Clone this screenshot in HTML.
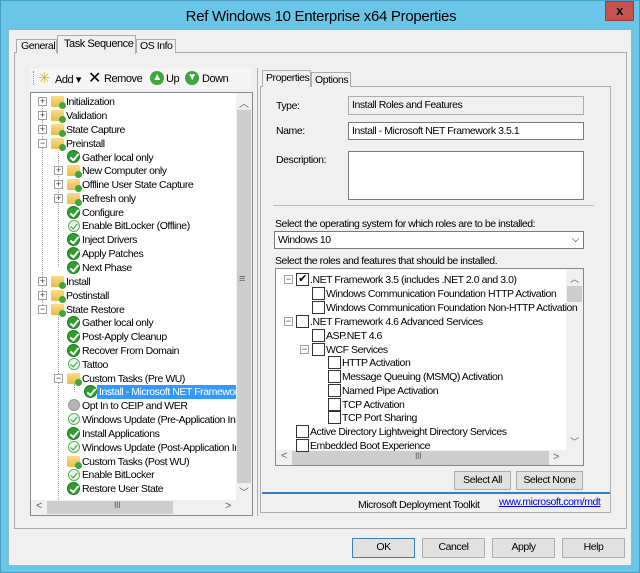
<!DOCTYPE html>
<html><head><meta charset="utf-8"><style>
*{box-sizing:border-box}
body{margin:0;width:640px;height:573px;overflow:hidden;background:#fff;font-family:"Liberation Sans",sans-serif;font-size:10.5px;letter-spacing:-0.45px;color:#000}
.a{position:absolute;white-space:nowrap}
#win{position:absolute;left:0;top:0;width:640px;height:573px;background:#69c6e8;border:1px solid #4a9cc0}
#client{position:absolute;left:8px;top:29px;width:624px;height:537px;background:#f0f0f0;border:1px solid #8db9cf}
.btn{position:absolute;background:#e1e1e1;border:1px solid #adadad;text-align:center;line-height:17px}
.box{position:absolute;background:#fff;border:1px solid #7a7a7a}
.fi{position:absolute;width:13px;height:11px;background:linear-gradient(#f6dc8a,#e9bc4c);border-radius:1px}
.fi:after{content:"";position:absolute;right:-2px;bottom:-2px;width:7px;height:7px;border-radius:50%;background:#3aa83a}
.ck{position:absolute;width:13px;height:13px;border-radius:50%;background:#2f9e2f;border:1px solid #1d7a1d}
.ck:after{content:"";position:absolute;left:4px;top:1px;width:3px;height:7px;border:solid #fff;border-width:0 2px 2px 0;transform:rotate(40deg)}
.ckl{position:absolute;width:12px;height:12px;border-radius:50%;background:#eaf7ea;border:1px solid #59b159}
.ckl:after{content:"";position:absolute;left:3px;top:1px;width:3px;height:6px;border:solid #3a9a3a;border-width:0 1px 1px 0;transform:rotate(40deg)}
.gr{position:absolute;width:12px;height:12px;border-radius:50%;background:#b5b5b5;border:1px solid #999}
.ex{position:absolute;width:9px;height:9px;border:1px solid #a0a0a0;background:#fff;font-size:9px;line-height:7px;text-align:center;color:#333;letter-spacing:0}
.cb{position:absolute;width:13px;height:13px;border:1px solid #333;background:#fff}
.dl{position:absolute;border-left:1px dotted #a0a0a0}
.t{margin-top:1px}
</style></head><body>
<div id="win">
<div class="a" style="left:0;width:640px;top:7px;text-align:center;font-size:15px;letter-spacing:-0.3px;color:#000">Ref Windows 10 Enterprise x64 Properties</div>
<div class="a" style="left:604px;top:0;width:29px;height:20px;background:#c75050;border:1px solid #9e3b3b;color:#000;font-weight:bold;text-align:center;line-height:18px;font-size:13px">x</div>
</div>
<div id="client"></div>
<div class="a" style="left:14px;top:52px;width:613px;height:477px;border:1px solid #adadad;background:#fff"></div>
<div class="a" style="left:15px;top:53px;width:611px;height:475px;background:#f0f0f0"></div>
<div class="a" style="left:16px;top:39px;width:41px;height:14px;border:1px solid #adadad;border-bottom:none;background:#f0f0f0;padding-left:4px;line-height:13px">General</div>
<div class="a" style="left:57px;top:35px;width:79px;height:19px;border:1px solid #adadad;border-bottom:none;background:#f0f0f0;padding-left:6px;line-height:16px;font-size:11px">Task Sequence</div>
<div class="a" style="left:136px;top:39px;width:40px;height:14px;border:1px solid #adadad;border-bottom:none;background:#f0f0f0;padding-left:3px;line-height:13px">OS Info</div>
<div class="a" style="left:30px;top:68px;width:221px;height:21px;background:#f5f5f5"></div>
<div class="a" style="left:33px;top:71px;height:14px;border-left:1px dotted #999"></div>
<div class="a" style="left:38px;top:69px;font-size:15px;color:#e8b800">✳</div>
<div class="a" style="left:55px;top:73px;font-size:11px">Add ▾</div>
<div class="a" style="left:88px;top:68px;font-size:16px">✕</div>
<div class="a" style="left:104px;top:73px;font-size:11px">Remove</div>
<div class="a" style="left:150px;top:71px;width:14px;height:14px;border-radius:50%;background:#3aa83a;color:#fff;font-size:10px;text-align:center;line-height:14px">▲</div>
<div class="a" style="left:166px;top:73px;font-size:11px">Up</div>
<div class="a" style="left:185px;top:71px;width:14px;height:14px;border-radius:50%;background:#3aa83a;color:#fff;font-size:10px;text-align:center;line-height:14px">▼</div>
<div class="a" style="left:202px;top:73px;font-size:11px">Down</div>
<div class="box" style="left:30px;top:92px;width:223px;height:424px;border-color:#828790"></div>
<div class="a" style="left:236px;top:93px;width:16px;height:407px;background:#f0f0f0"></div>
<div class="a" style="left:237px;top:110px;width:14px;height:373px;background:#cdcdcd"></div>
<div class="a" style="left:239px;top:95px;font-size:10px;color:#606060">︿</div>
<div class="a" style="left:239px;top:273px;font-size:11px;color:#606060">≡</div>
<div class="a" style="left:239px;top:484px;font-size:10px;color:#606060">﹀</div>
<div class="a" style="left:31px;top:500px;width:221px;height:15px;background:#f0f0f0"></div>
<div class="a" style="left:47px;top:501px;width:126px;height:13px;background:#cdcdcd"></div>
<div class="a" style="left:36px;top:500px;font-size:11px;color:#606060">&lt;</div>
<div class="a" style="left:225px;top:500px;font-size:11px;color:#606060">&gt;</div>
<div class="a" style="left:114px;top:500px;font-size:9px;color:#606060">III</div>
<div class="dl" style="left:42px;top:104px;height:205px"></div>
<div class="dl" style="left:58px;top:148px;height:119px"></div>
<div class="dl" style="left:58px;top:314px;height:186px"></div>
<div class="dl" style="left:74px;top:384px;height:8px"></div>

<div class="ex" style="left:38px;top:97px">+</div><div class="fi" style="left:51px;top:96px"></div><div class="a t" style="left:66px;top:95px">Initialization</div>
<div class="ex" style="left:38px;top:111px">+</div><div class="fi" style="left:51px;top:110px"></div><div class="a t" style="left:66px;top:109px">Validation</div>
<div class="ex" style="left:38px;top:125px">+</div><div class="fi" style="left:51px;top:124px"></div><div class="a t" style="left:66px;top:123px">State Capture</div>
<div class="ex" style="left:38px;top:139px">−</div><div class="fi" style="left:51px;top:138px"></div><div class="a t" style="left:66px;top:137px">Preinstall</div>
<div class="ck" style="left:67px;top:150px"></div><div class="a t" style="left:82px;top:151px">Gather local only</div>
<div class="ex" style="left:54px;top:166px">+</div><div class="fi" style="left:67px;top:165px"></div><div class="a t" style="left:82px;top:164px">New Computer only</div>
<div class="ex" style="left:54px;top:180px">+</div><div class="fi" style="left:67px;top:179px"></div><div class="a t" style="left:82px;top:178px">Offline User State Capture</div>
<div class="ex" style="left:54px;top:194px">+</div><div class="fi" style="left:67px;top:193px"></div><div class="a t" style="left:82px;top:192px">Refresh only</div>
<div class="ck" style="left:67px;top:206px"></div><div class="a t" style="left:82px;top:206px">Configure</div>
<div class="ckl" style="left:68px;top:220px"></div><div class="a t" style="left:82px;top:219px">Enable BitLocker (Offline)</div>
<div class="ck" style="left:67px;top:233px"></div><div class="a t" style="left:82px;top:233px">Inject Drivers</div>
<div class="ck" style="left:67px;top:247px"></div><div class="a t" style="left:82px;top:247px">Apply Patches</div>
<div class="ck" style="left:67px;top:261px"></div><div class="a t" style="left:82px;top:261px">Next Phase</div>
<div class="ex" style="left:38px;top:277px">+</div><div class="fi" style="left:51px;top:276px"></div><div class="a t" style="left:66px;top:275px">Install</div>
<div class="ex" style="left:38px;top:291px">+</div><div class="fi" style="left:51px;top:290px"></div><div class="a t" style="left:66px;top:289px">Postinstall</div>
<div class="ex" style="left:38px;top:305px">−</div><div class="fi" style="left:51px;top:304px"></div><div class="a t" style="left:66px;top:303px">State Restore</div>
<div class="ck" style="left:67px;top:316px"></div><div class="a t" style="left:82px;top:316px">Gather local only</div>
<div class="ck" style="left:67px;top:330px"></div><div class="a t" style="left:82px;top:330px">Post-Apply Cleanup</div>
<div class="ck" style="left:67px;top:344px"></div><div class="a t" style="left:82px;top:344px">Recover From Domain</div>
<div class="ckl" style="left:68px;top:358px"></div><div class="a t" style="left:82px;top:358px">Tattoo</div>
<div class="ex" style="left:54px;top:374px">−</div><div class="fi" style="left:67px;top:373px"></div><div class="a t" style="left:82px;top:372px">Custom Tasks (Pre WU)</div>
<div class="ck" style="left:84px;top:385px"></div><div class="a" style="left:97px;top:385px;width:139px;height:14px;background:#3399ff;color:#fff;padding-left:2px;line-height:14px;overflow:hidden">Install - Microsoft NET Framework</div>
<div class="gr" style="left:68px;top:399px"></div><div class="a t" style="left:82px;top:399px">Opt In to CEIP and WER</div>
<div class="ckl" style="left:68px;top:413px"></div><div class="a t" style="left:82px;top:413px;width:154px;overflow:hidden">Windows Update (Pre-Application Installation)</div>
<div class="ck" style="left:67px;top:427px"></div><div class="a t" style="left:82px;top:427px">Install Applications</div>
<div class="ckl" style="left:68px;top:441px"></div><div class="a t" style="left:82px;top:441px;width:154px;overflow:hidden">Windows Update (Post-Application Installation)</div>
<div class="fi" style="left:67px;top:456px"></div><div class="a t" style="left:82px;top:455px">Custom Tasks (Post WU)</div>
<div class="ckl" style="left:68px;top:469px"></div><div class="a t" style="left:82px;top:468px">Enable BitLocker</div>
<div class="ck" style="left:67px;top:482px"></div><div class="a t" style="left:82px;top:482px">Restore User State</div>
<div class="a" style="left:257px;top:68px;width:1px;height:448px;background:#adadad"></div>
<div class="a" style="left:260px;top:86px;width:351px;height:427px;border:1px solid #adadad;background:#fff"></div>
<div class="a" style="left:261px;top:87px;width:349px;height:425px;background:#f0f0f0"></div>
<div class="a" style="left:262px;top:70px;width:49px;height:17px;border:1px solid #adadad;border-bottom:none;background:#f0f0f0;padding-left:3px;line-height:15px">Properties</div>
<div class="a" style="left:311px;top:72px;width:40px;height:15px;border:1px solid #adadad;border-bottom:none;background:#f0f0f0;padding-left:3px;line-height:14px">Options</div>
<div class="a" style="left:276px;top:100px">Type:</div>
<div class="a" style="left:348px;top:96px;width:236px;height:19px;border:1px solid #adadad;background:#f0f0f0;padding-left:3px;line-height:17px">Install Roles and Features</div>
<div class="a" style="left:276px;top:125px">Name:</div>
<div class="box" style="left:348px;top:122px;width:236px;height:18px;border-color:#7a7a7a;padding-left:3px;line-height:16px">Install - Microsoft NET Framework 3.5.1</div>
<div class="a" style="left:276px;top:154px">Description:</div>
<div class="box" style="left:348px;top:151px;width:236px;height:49px"></div>
<div class="a" style="left:273px;top:205px;width:321px;height:1px;background:#bcbcbc"></div>
<div class="a" style="left:275px;top:218px">Select the operating system for which roles are to be installed:</div>
<div class="box" style="left:274px;top:231px;width:310px;height:18px;padding-left:3px;line-height:16px">Windows 10<span style="position:absolute;right:4px;top:0;font-size:10px">⌵</span></div>
<div class="a" style="left:275px;top:255px">Select the roles and features that should be installed.</div>
<div class="box" style="left:275px;top:268px;width:309px;height:198px;border-color:#828790;overflow:hidden">
<div class="a" style="left:290px;top:0;width:17px;height:181px;background:#f0f0f0"></div>
<div class="a" style="left:291px;top:17px;width:15px;height:16px;background:#cdcdcd"></div>
<div class="a" style="left:294px;top:3px;font-size:9px;color:#606060">︿</div>
<div class="a" style="left:294px;top:166px;font-size:9px;color:#606060">﹀</div>
<div class="a" style="left:0;top:181px;width:308px;height:16px;background:#f0f0f0"></div>
<div class="a" style="left:16px;top:182px;width:257px;height:14px;background:#cdcdcd"></div>
<div class="a" style="left:5px;top:181px;font-size:11px;color:#606060">&lt;</div>
<div class="a" style="left:277px;top:182px;font-size:11px;color:#606060">&gt;</div>
<div class="a" style="left:139px;top:182px;font-size:9px;color:#606060">III</div>
<div class="ex" style="left:8px;top:6px">−</div><div class="cb" style="left:20px;top:4px;font-size:11px;line-height:11px;text-align:center">✔</div><div class="a t" style="left:34px;top:4px">.NET Framework 3.5 (includes .NET 2.0 and 3.0)</div>
<div class="cb" style="left:36px;top:18px"></div><div class="a t" style="left:50px;top:18px">Windows Communication Foundation HTTP Activation</div>
<div class="cb" style="left:36px;top:32px"></div><div class="a t" style="left:50px;top:32px">Windows Communication Foundation Non-HTTP Activation</div>
<div class="ex" style="left:8px;top:48px">−</div><div class="cb" style="left:20px;top:46px"></div><div class="a t" style="left:34px;top:46px">.NET Framework 4.6 Advanced Services</div>
<div class="cb" style="left:36px;top:60px"></div><div class="a t" style="left:50px;top:60px">ASP.NET 4.6</div>
<div class="ex" style="left:24px;top:76px">−</div><div class="cb" style="left:36px;top:74px"></div><div class="a t" style="left:50px;top:74px">WCF Services</div>
<div class="cb" style="left:52px;top:87px"></div><div class="a t" style="left:66px;top:87px">HTTP Activation</div>
<div class="cb" style="left:52px;top:101px"></div><div class="a t" style="left:66px;top:101px">Message Queuing (MSMQ) Activation</div>
<div class="cb" style="left:52px;top:115px"></div><div class="a t" style="left:66px;top:115px">Named Pipe Activation</div>
<div class="cb" style="left:52px;top:129px"></div><div class="a t" style="left:66px;top:129px">TCP Activation</div>
<div class="cb" style="left:52px;top:142px"></div><div class="a t" style="left:66px;top:142px">TCP Port Sharing</div>
<div class="cb" style="left:20px;top:156px"></div><div class="a t" style="left:34px;top:156px">Active Directory Lightweight Directory Services</div>
<div class="cb" style="left:20px;top:170px"></div><div class="a t" style="left:34px;top:170px">Embedded Boot Experience</div>
</div>
<div class="btn" style="left:454px;top:471px;width:57px;height:19px">Select All</div>
<div class="btn" style="left:516px;top:471px;width:67px;height:19px">Select None</div>
<div class="a" style="left:262px;top:492px;width:348px;height:2px;background:#2a7fd0"></div>
<div class="a" style="left:358px;top:499px">Microsoft Deployment Toolkit</div>
<div class="a" style="left:499px;top:496px;color:#0000ee;text-decoration:underline">www.microsoft.com/mdt</div>
<div class="btn" style="left:352px;top:538px;width:63px;height:20px;border-color:#3c7fb1">OK</div>
<div class="btn" style="left:422px;top:538px;width:63px;height:20px">Cancel</div>
<div class="btn" style="left:492px;top:538px;width:63px;height:20px">Apply</div>
<div class="btn" style="left:562px;top:538px;width:63px;height:20px">Help</div>
</body></html>
